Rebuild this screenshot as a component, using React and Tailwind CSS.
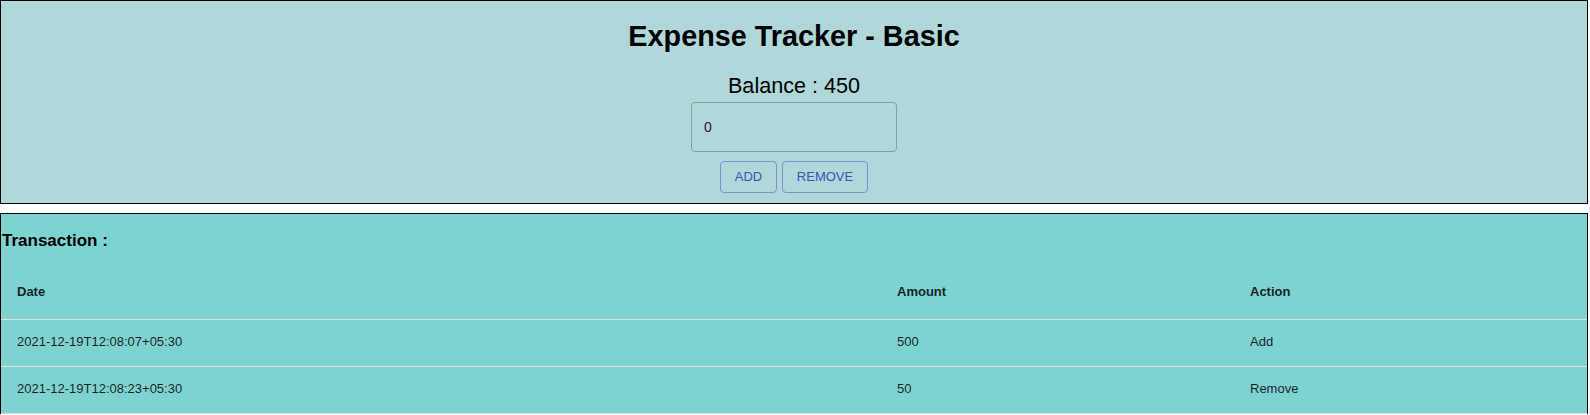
import React from 'react';

const transactions = [
  { date: '2021-12-19T12:08:07+05:30', amount: 500, action: 'Add' },
  { date: '2021-12-19T12:08:23+05:30', amount: 50, action: 'Remove' },
];

export default function App() {
  return (
    <div className="w-[1588px] font-['Liberation_Sans',Arial,sans-serif] text-black">
      {/* Balance panel */}
      <div className="h-[204px] border border-black bg-[#b0d7d9] flex flex-col items-center">
        <h1 className="mt-[18px] text-[28.8px] leading-[34px] font-bold">Expense Tracker - Basic</h1>
        <div className="mt-[20px] text-[21.6px] leading-[26px]">Balance : 450</div>
        <div className="mt-[3px] w-[206px] h-[50px] rounded-[4px] border border-[#869fa3] flex items-center pl-[12px] text-[14px] text-[#222]">
          0
        </div>
        <div className="mt-[9px] flex gap-[5px]">
          <button className="w-[57px] h-[32px] rounded-[4px] border border-[#7d92cc] text-[13px] text-[#3f51b5] uppercase">
            Add
          </button>
          <button className="w-[86px] h-[32px] rounded-[4px] border border-[#7d92cc] text-[13px] text-[#3f51b5] uppercase">
            Remove
          </button>
        </div>
      </div>

      {/* Transactions */}
      <div className="mt-[9px] border border-black border-b-0 bg-[#7ed2d0]">
        <div className="h-[57px] pt-[17px] pl-px text-[17px] leading-[20px] font-bold">Transaction :</div>
        <table className="w-full border-collapse text-[13px] text-black/85">
          <thead>
            <tr className="border-b border-[#e0e0e0]">
              <th className="w-[880px] h-[48px] pl-[16px] text-left align-top pt-[11px] leading-[20px] font-bold">Date</th>
              <th className="w-[353px] pl-[16px] text-left align-top pt-[11px] leading-[20px] font-bold">Amount</th>
              <th className="pl-[16px] text-left align-top pt-[11px] leading-[20px] font-bold">Action</th>
            </tr>
          </thead>
          <tbody>
            {transactions.map((t) => (
              <tr key={t.date} className="border-b border-[#e0e0e0]">
                <td className="h-[47px] pl-[16px] align-top pt-[12px] leading-[20px]">{t.date}</td>
                <td className="pl-[16px] align-top pt-[12px] leading-[20px]">{t.amount}</td>
                <td className="pl-[16px] align-top pt-[12px] leading-[20px]">{t.action}</td>
              </tr>
            ))}
          </tbody>
        </table>
      </div>
    </div>
  );
}
